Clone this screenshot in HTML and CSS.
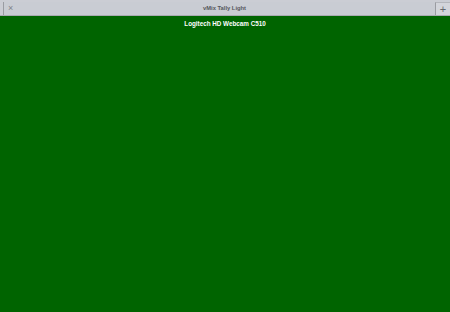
FILE: index.html
```html
<!DOCTYPE html>
<html lang="en">
<head>
    <meta charset="UTF-8">
    <title>vMix Tally Light</title>
    <link rel="stylesheet" href="styles.css">
</head>
<body>
    <div class="tabbar">
        <div class="tab">
            <span class="close">&times;</span>
            <span class="tab-title">vMix Tally Light</span>
        </div>
        <div class="newtab">+</div>
    </div>
    <div class="tally">
        <div class="input-name">Logitech HD Webcam C510</div>
    </div>
</body>
</html>
```
FILE: styles.css
```css
body {
    margin: 0;
    font-family: "Liberation Sans", Arial, sans-serif;
    height: 312px;
    display: flex;
    flex-direction: column;
    overflow: hidden;
}
.tabbar {
    height: 15px;
    display: flex;
    background: #cbcdd4;
    border-bottom: 1px solid #a9abb1;
}
.tab {
    flex: 1;
    display: flex;
    align-items: center;
    margin-left: 3px;
    margin-top: 2px;
    border-left: 1px solid #9a9ca2;
    background: #c9ccd3;
}
.close {
    font-size: 9px;
    color: #808288;
    margin-left: 4px;
    margin-top: -2px;
    width: 10px;
}
.tab-title {
    flex: 1;
    text-align: center;
    font-size: 5.8px;
    font-weight: bold;
    color: #55575c;
    margin-top: -2px;
    margin-right: 4px;
}
.newtab {
    width: 14px;
    margin-top: 2px;
    border-left: 1px solid #9a9ca2;
    border-top: 1px solid #b4b6bc;
    background: #d3d5db;
    color: #66686d;
    font-size: 11px;
    line-height: 12px;
    text-align: center;
}
.tally {
    flex: 1;
    background: #006400;
}
.input-name {
    text-align: center;
    color: #fff;
    font-size: 6.3px;
    font-weight: bold;
    padding-top: 4px;
}
```
